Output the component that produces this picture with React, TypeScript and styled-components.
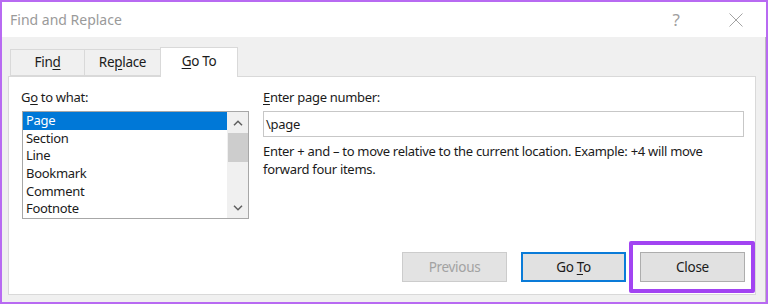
import styled, { createGlobalStyle } from "styled-components";

const GlobalStyle = createGlobalStyle`
  html, body {
    margin: 0;
    padding: 0;
    background: #ffffff;
  }
  body {
    font-family: "Noto Sans", "Open Sans", Arial, sans-serif;
    font-size: 13px;
    letter-spacing: -0.3px;
    color: #1b1b1b;
  }
`;

const Window = styled.div`
  box-sizing: border-box;
  width: 768px;
  height: 304px;
  border: 2px solid #b86af2;
  background: #f0f0f0;
  display: flex;
  flex-direction: column;
  overflow: hidden;
  box-shadow: inset -1px 0 0 #bdbdbd;
`;

const TitleBar = styled.div`
  height: 35px;
  flex: none;
  background: #ffffff;
  display: flex;
  align-items: center;
  padding-left: 8px;
`;

const Title = styled.div`
  flex: 1;
  font-size: 14px;
  letter-spacing: 0;
  color: #9a9a9a;
  padding-bottom: 1px;
`;

const TitleButton = styled.div`
  width: 60px;
  display: flex;
  justify-content: center;
  align-items: center;
  color: #a0a0a0;
  font-size: 17px;
`;

const Body = styled.div`
  flex: 1;
  padding: 10px 10px 7px 6px;
  display: flex;
  flex-direction: column;
`;

const TabRow = styled.div`
  display: flex;
  align-items: flex-end;
  height: 29px;
  margin-left: 2px;
  position: relative;
  z-index: 1;
`;

const Tab = styled.div<{ $active?: boolean; $width: number }>`
  box-sizing: border-box;
  width: ${(p) => p.$width}px;
  height: ${(p) => (p.$active ? 30 : 27)}px;
  margin-bottom: ${(p) => (p.$active ? -1 : 0)}px;
  padding-bottom: ${(p) => (p.$active ? 3 : 1)}px;
  background: ${(p) => (p.$active ? "#ffffff" : "#f0f0f0")};
  border: 1px solid #d9d9d9;
  border-bottom: ${(p) => (p.$active ? "none" : "1px solid #d9d9d9")};
  margin-right: -1px;
  display: flex;
  align-items: center;
  justify-content: center;
  font-size: 13.5px;
`;

const Key = styled.span`
  text-decoration: underline;
  text-underline-offset: 2px;
  text-decoration-thickness: 1px;
`;

const Panel = styled.div`
  box-sizing: border-box;
  flex: 1;
  background: #ffffff;
  border: 1px solid #d9d9d9;
  padding: 11px 10px 12px 12px;
  display: flex;
  flex-direction: column;
`;

const Columns = styled.div`
  display: grid;
  grid-template-columns: 228px 481px;
  column-gap: 14px;
`;

const Column = styled.div`
  display: flex;
  flex-direction: column;
`;

const Label = styled.div`
  line-height: 18px;
  margin-bottom: 5px;
`;

const ListBox = styled.div`
  box-sizing: border-box;
  margin-left: 1px;
  width: 227px;
  height: 108px;
  border: 1px solid #a7a7a7;
  display: flex;
  background: #ffffff;
`;

const Items = styled.div`
  flex: 1;
  display: flex;
  flex-direction: column;
`;

const Item = styled.div<{ $selected?: boolean }>`
  height: 17.7px;
  line-height: 17.7px;
  padding-left: 3px;
  background: ${(p) => (p.$selected ? "#0078d7" : "transparent")};
  color: ${(p) => (p.$selected ? "#ffffff" : "#1b1b1b")};
  white-space: nowrap;
`;

const ScrollBar = styled.div`
  width: 21px;
  background: #f0f0f0;
  display: flex;
  flex-direction: column;
  align-items: center;
`;

const ArrowBox = styled.div`
  height: 21px;
  width: 100%;
  display: flex;
  align-items: center;
  justify-content: center;
`;

const Thumb = styled.div`
  width: 20px;
  height: 29px;
  background: #cdcdcd;
`;

const Track = styled.div`
  flex: 1;
`;

const TextInput = styled.div`
  box-sizing: border-box;
  height: 26px;
  border: 1px solid #c7c7c7;
  padding: 0 2px;
  display: flex;
  align-items: center;
`;

const Help = styled.div`
  margin-top: 5px;
  line-height: 18px;
`;

const ButtonRow = styled.div`
  margin-top: auto;
  display: flex;
  justify-content: flex-end;
  gap: 14px;
`;

const Button = styled.div<{ $variant?: "disabled" | "default" | "normal" }>`
  box-sizing: border-box;
  width: 105px;
  height: 30px;
  display: flex;
  align-items: center;
  justify-content: center;
  font-size: 13.5px;
  position: relative;
  background: ${(p) => (p.$variant === "disabled" ? "#e3e3e3" : "#e1e1e1")};
  color: ${(p) => (p.$variant === "disabled" ? "#a2a2a2" : "#1b1b1b")};
  border: ${(p) =>
    p.$variant === "default"
      ? "2px solid #0a7bd8"
      : p.$variant === "disabled"
      ? "1px solid #cccccc"
      : "1px solid #adadad"};
`;

const Highlight = styled.div`
  position: absolute;
  left: -12px;
  right: -11px;
  top: -12px;
  bottom: -12px;
  border: 4px solid #a244f2;
  border-radius: 2px;
  pointer-events: none;
`;

const ChevronUp = () => (
  <svg width="10" height="6" viewBox="0 0 10 6">
    <polyline points="1,5.2 5,1.2 9,5.2" fill="none" stroke="#5f5f5f" strokeWidth="1.5" />
  </svg>
);

const ChevronDown = () => (
  <svg width="10" height="6" viewBox="0 0 10 6">
    <polyline points="1,0.8 5,4.8 9,0.8" fill="none" stroke="#5f5f5f" strokeWidth="1.5" />
  </svg>
);

const CloseGlyph = () => (
  <svg width="14" height="14" viewBox="0 0 14 14">
    <path d="M0.5 0.5 L13.5 13.5 M13.5 0.5 L0.5 13.5" stroke="#a3a3a3" strokeWidth="1" fill="none" />
  </svg>
);

const targets = ["Page", "Section", "Line", "Bookmark", "Comment", "Footnote"];

export default function App() {
  return (
    <>
      <GlobalStyle />
      <Window>
        <TitleBar>
          <Title>Find and Replace</Title>
          <TitleButton>?</TitleButton>
          <TitleButton>
            <CloseGlyph />
          </TitleButton>
        </TitleBar>
        <Body>
          <TabRow>
            <Tab $width={75}>
              <span>
                Fin<Key>d</Key>
              </span>
            </Tab>
            <Tab $width={77}>
              <span>
                Re<Key>p</Key>lace
              </span>
            </Tab>
            <Tab $width={78} $active>
              <span>
                <Key>G</Key>o To
              </span>
            </Tab>
          </TabRow>
          <Panel>
            <Columns>
              <Column>
                <Label>
                  G<Key>o</Key> to what:
                </Label>
                <ListBox>
                  <Items>
                    {targets.map((t, i) => (
                      <Item key={t} $selected={i === 0}>
                        {t}
                      </Item>
                    ))}
                  </Items>
                  <ScrollBar>
                    <ArrowBox>
                      <ChevronUp />
                    </ArrowBox>
                    <Thumb />
                    <Track />
                    <ArrowBox>
                      <ChevronDown />
                    </ArrowBox>
                  </ScrollBar>
                </ListBox>
              </Column>
              <Column>
                <Label>
                  <Key>E</Key>nter page number:
                </Label>
                <TextInput>\page</TextInput>
                <Help>
                  Enter + and – to move relative to the current location. Example: +4 will move
                  <br />
                  forward four items.
                </Help>
              </Column>
            </Columns>
            <ButtonRow>
              <Button $variant="disabled">Previous</Button>
              <Button $variant="default">
                <span>
                  Go <Key>T</Key>o
                </span>
              </Button>
              <Button $variant="normal">
                Close
                <Highlight />
              </Button>
            </ButtonRow>
          </Panel>
        </Body>
      </Window>
    </>
  );
}
